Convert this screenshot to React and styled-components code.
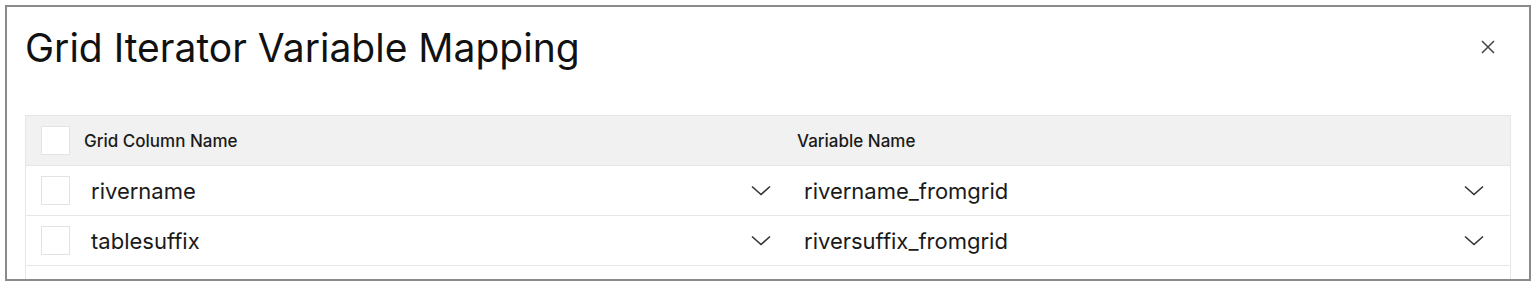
import React from 'react'
import styled, { createGlobalStyle } from 'styled-components'

const GlobalStyle = createGlobalStyle`
  html, body {
    margin: 0;
    padding: 0;
    background: #ffffff;
  }
  body {
    font-family: Inter, "Liberation Sans", sans-serif;
    color: #1a1a1a;
  }
`

const Frame = styled.div`
  box-sizing: border-box;
  margin: 5px;
  height: 276px;
  border: 2px solid #8a8a8a;
  padding: 0 18px;
  overflow: hidden;
  background: #fff;
`

const Header = styled.div`
  height: 80px;
  display: flex;
  align-items: center;
  justify-content: space-between;
`

const Title = styled.h1`
  margin: 0;
  font-size: 39px;
  font-weight: 400;
  color: #111;
`

const CloseButton = styled.button`
  border: 0;
  background: none;
  padding: 0;
  margin-right: 16px;
  width: 15px;
  height: 15px;
  display: flex;
  align-items: center;
  justify-content: center;
  cursor: pointer;
`

const Table = styled.div`
  margin-top: 28px;
  border: 1px solid #e6e6e6;
  border-bottom: 0;
`

const Row = styled.div`
  box-sizing: border-box;
  display: grid;
  grid-template-columns: 50px 713px 1fr;
  height: 50px;
  border-bottom: 1px solid #e6e6e6;
  background: ${p => (p.head ? '#f1f1f1' : '#fff')};
`

const Cell = styled.div`
  display: flex;
  align-items: center;
  padding: 0 ${p => (p.last ? '26px' : '18px')} 0 8px;
`

const CheckCell = styled.div`
  display: flex;
  align-items: center;
  padding-left: 15px;
`

const Checkbox = styled.span`
  box-sizing: border-box;
  width: 29px;
  height: 29px;
  border: 1px solid #e3e3e3;
  background: #fff;
`

const HeadLabel = styled.span`
  font-size: 17px;
  font-weight: 500;
  color: #1a1a1a;
`

const Select = styled.div`
  flex: 1;
  display: flex;
  align-items: center;
  justify-content: space-between;
  padding-left: 7px;
  font-size: 22px;
  color: #1a1a1a;
`

const Chevron = () => (
  <svg width="20" height="11" viewBox="0 0 20 11">
    <polyline points="1,1.5 10,9.5 19,1.5" fill="none" stroke="#333" strokeWidth="1.6" />
  </svg>
)

const CloseIcon = () => (
  <svg width="14" height="14" viewBox="0 0 14 14">
    <path d="M1 1 L13 13 M13 1 L1 13" stroke="#444" strokeWidth="1.5" />
  </svg>
)

const mappings = [
  { column: 'rivername', variable: 'rivername_fromgrid' },
  { column: 'tablesuffix', variable: 'riversuffix_fromgrid' }
]

const App = () => (
  <>
    <GlobalStyle />
    <Frame>
      <Header>
        <Title>Grid Iterator Variable Mapping</Title>
        <CloseButton aria-label="Close">
          <CloseIcon />
        </CloseButton>
      </Header>
      <Table>
        <Row head>
          <CheckCell><Checkbox /></CheckCell>
          <Cell><HeadLabel>Grid Column Name</HeadLabel></Cell>
          <Cell last><HeadLabel>Variable Name</HeadLabel></Cell>
        </Row>
        {mappings.map(m => (
          <Row key={m.column}>
            <CheckCell><Checkbox /></CheckCell>
            <Cell>
              <Select>{m.column}<Chevron /></Select>
            </Cell>
            <Cell last>
              <Select>{m.variable}<Chevron /></Select>
            </Cell>
          </Row>
        ))}
        <Row />
      </Table>
    </Frame>
  </>
)

export default App
